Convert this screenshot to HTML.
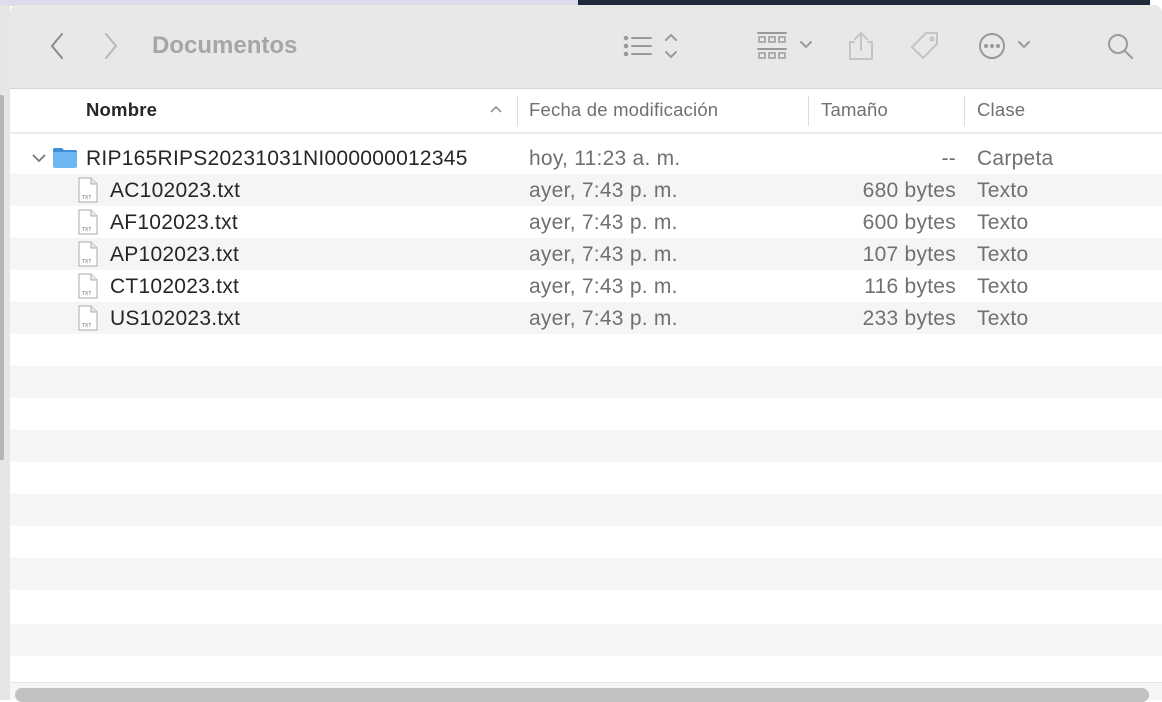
<!DOCTYPE html>
<html><head><meta charset="utf-8"><style>
*{margin:0;padding:0;box-sizing:border-box}
body{width:1162px;height:700px;overflow:hidden;background:#fff;font-family:"Liberation Sans",sans-serif;position:relative}
.a{position:absolute}
.row{position:absolute;left:10px;width:1152px;height:32px}
.g{background:#f4f5f5}
.t{position:absolute;top:1px;font-size:21px;letter-spacing:0.25px;line-height:32px;white-space:nowrap}
.r{right:206px;text-align:right}
.n{color:#262626}
.m{color:#707070}
.h{position:absolute;top:99px;font-size:18.5px;color:#707070;line-height:22px;letter-spacing:0.2px}
.sep{position:absolute;top:96px;width:1px;height:30px;background:#dcdcdc}
svg{position:absolute}
</style></head><body>
<div class="a" style="left:0;top:0;width:578px;height:6px;background:#dcdcec"></div>
<div class="a" style="left:578px;top:0;width:572px;height:6px;background:#1f2a3a"></div>
<div class="a" style="left:0;top:5px;width:10px;height:695px;background:#e6e6e4"></div>
<div class="a" style="left:0;top:95px;width:4px;height:365px;background:#b4b4b4;border-radius:0 2px 2px 0"></div>
<div class="a" style="left:10px;top:5px;width:1152px;height:84px;background:#e8e8e7;border-radius:8px 8px 0 0;border-bottom:1px solid #d6d6d6"></div>
<svg style="left:44px;top:32px" width="80" height="28" fill="none" stroke-width="2" stroke-linecap="round"><path d="M18 2 L8 14 L18 26" stroke="#8a8a8a"/><path d="M62 2 L72 14 L62 26" stroke="#b8b8b8"/></svg>
<div class="a" style="left:152px;top:32px;font-size:24px;font-weight:bold;color:#a6a6a6">Documentos</div>
<svg style="left:620px;top:30px" width="520" height="34" fill="none" stroke="#9a9a9a" stroke-width="2" stroke-linecap="round">
<circle cx="6" cy="8" r="1.3" fill="#9a9a9a"/><circle cx="6" cy="16" r="1.3" fill="#9a9a9a"/><circle cx="6" cy="24" r="1.3" fill="#9a9a9a"/>
<path d="M12 8H31M12 16H31M12 24H31"/><path d="M46 10l5-5 5 5M46 22l5 5 5-5"/>
<path d="M138 3H166M138 19H166" /><rect x="139" y="7" width="6" height="5" stroke-width="1.5"/><rect x="149" y="7" width="6" height="5" stroke-width="1.5"/><rect x="159" y="7" width="6" height="5" stroke-width="1.5"/>
<rect x="139" y="23" width="6" height="5" stroke-width="1.5"/><rect x="149" y="23" width="6" height="5" stroke-width="1.5"/><rect x="159" y="23" width="6" height="5" stroke-width="1.5"/>
<path d="M181 12l5 5 5-5"/>
<g stroke="#c4c4c4"><path d="M234 12h-4v17h22v-17h-4M241 3v17M235 9l6-6 6 6"/>
<path d="M306 3h11v11l-14 14-11-11z"/><circle cx="312" cy="9" r="1.5"/></g>
<circle cx="372" cy="16" r="12"/><circle cx="366" cy="16" r="1" fill="#9a9a9a"/><circle cx="372" cy="16" r="1" fill="#9a9a9a"/><circle cx="378" cy="16" r="1" fill="#9a9a9a"/>
<path d="M399 12l5 5 5-5"/>
<circle cx="498" cy="14" r="9"/><path d="M505 21l7 7"/>
</svg>
<div class="h" style="left:86px;color:#262626;font-weight:bold">Nombre</div>
<svg style="left:489px;top:104px" width="14" height="10" fill="none" stroke="#888" stroke-width="1.5"><path d="M2 8l5-5 5 5"/></svg>
<div class="sep" style="left:517px"></div>
<div class="h" style="left:529px">Fecha de modificación</div>
<div class="sep" style="left:808px"></div>
<div class="h" style="left:821px">Tamaño</div>
<div class="sep" style="left:964px"></div>
<div class="h" style="left:977px">Clase</div>
<div class="a" style="left:10px;top:132px;width:1152px;height:2px;background:#ececec"></div>

<div class="row g" style="top:174px"></div>
<div class="row g" style="top:238px"></div>
<div class="row g" style="top:302px"></div>
<div class="row g" style="top:366px"></div>
<div class="row g" style="top:430px"></div>
<div class="row g" style="top:494px"></div>
<div class="row g" style="top:558px"></div>
<div class="row g" style="top:624px"></div>

<div class="row" style="top:142px">
<svg style="left:22px;top:11px" width="14" height="10" fill="none" stroke="#777" stroke-width="1.8"><path d="M1 2l6 6 6-6"/></svg>
<svg style="left:42px;top:5px" width="26" height="22"><path d="M1 3a2 2 0 0 1 2-2h7l2 2h11a2 2 0 0 1 2 2v1H1z" fill="#3e8fd6"/><rect x="1" y="5" width="24" height="16" rx="2" fill="#6db6f2"/></svg>
<div class="t n" style="left:76px">RIP165RIPS20231031NI000000012345</div>
<div class="t m" style="left:519px">hoy, 11:23 a. m.</div>
<div class="t m r">--</div>
<div class="t m" style="left:967px">Carpeta</div></div>

<div class="row" style="top:174px"><svg style="left:68px;top:3px" width="20" height="26"><path d="M1 1h12l6 6v18H1z" fill="#fff" stroke="#aaa"/><path d="M13 1v6h6" fill="#eee" stroke="#aaa"/><text x="4" y="22" font-size="5" fill="#666" font-family="Liberation Sans">TXT</text></svg><div class="t n" style="left:100px">AC102023.txt</div><div class="t m" style="left:519px">ayer, 7:43 p. m.</div><div class="t m r">680 bytes</div><div class="t m" style="left:967px">Texto</div></div>
<div class="row" style="top:206px"><svg style="left:68px;top:3px" width="20" height="26"><path d="M1 1h12l6 6v18H1z" fill="#fff" stroke="#aaa"/><path d="M13 1v6h6" fill="#eee" stroke="#aaa"/><text x="4" y="22" font-size="5" fill="#666" font-family="Liberation Sans">TXT</text></svg><div class="t n" style="left:100px">AF102023.txt</div><div class="t m" style="left:519px">ayer, 7:43 p. m.</div><div class="t m r">600 bytes</div><div class="t m" style="left:967px">Texto</div></div>
<div class="row" style="top:238px"><svg style="left:68px;top:3px" width="20" height="26"><path d="M1 1h12l6 6v18H1z" fill="#fff" stroke="#aaa"/><path d="M13 1v6h6" fill="#eee" stroke="#aaa"/><text x="4" y="22" font-size="5" fill="#666" font-family="Liberation Sans">TXT</text></svg><div class="t n" style="left:100px">AP102023.txt</div><div class="t m" style="left:519px">ayer, 7:43 p. m.</div><div class="t m r">107 bytes</div><div class="t m" style="left:967px">Texto</div></div>
<div class="row" style="top:270px"><svg style="left:68px;top:3px" width="20" height="26"><path d="M1 1h12l6 6v18H1z" fill="#fff" stroke="#aaa"/><path d="M13 1v6h6" fill="#eee" stroke="#aaa"/><text x="4" y="22" font-size="5" fill="#666" font-family="Liberation Sans">TXT</text></svg><div class="t n" style="left:100px">CT102023.txt</div><div class="t m" style="left:519px">ayer, 7:43 p. m.</div><div class="t m r">116 bytes</div><div class="t m" style="left:967px">Texto</div></div>
<div class="row" style="top:302px"><svg style="left:68px;top:3px" width="20" height="26"><path d="M1 1h12l6 6v18H1z" fill="#fff" stroke="#aaa"/><path d="M13 1v6h6" fill="#eee" stroke="#aaa"/><text x="4" y="22" font-size="5" fill="#666" font-family="Liberation Sans">TXT</text></svg><div class="t n" style="left:100px">US102023.txt</div><div class="t m" style="left:519px">ayer, 7:43 p. m.</div><div class="t m r">233 bytes</div><div class="t m" style="left:967px">Texto</div></div>

<div class="a" style="left:10px;top:682px;width:1152px;height:18px;background:#f6f6f6;border-top:1px solid #e4e4e4"></div>
<div class="a" style="left:15px;top:688px;width:1134px;height:14px;background:#c2c2c2;border-radius:7px"></div>
</body></html>
